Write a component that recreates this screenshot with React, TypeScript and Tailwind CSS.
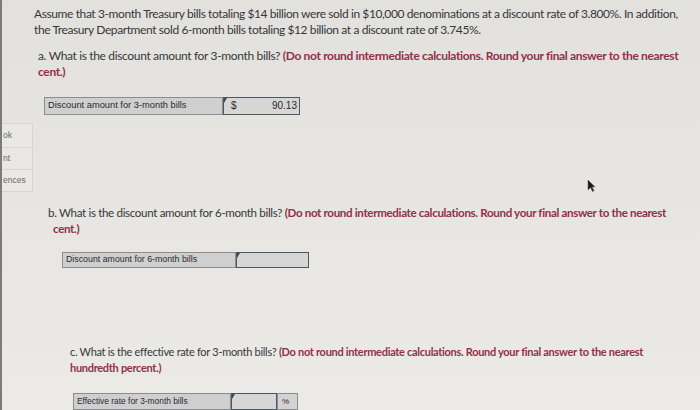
import React from "react";

const font = { fontFamily: "Lato, 'Open Sans', sans-serif" };
const arial = { fontFamily: "'Liberation Sans', Arial, sans-serif" };

function Cursor() {
  return (
    <svg className="absolute left-[587px] top-[179px]" width="9" height="13" viewBox="0 0 9 13">
      <path d="M1 1 L1 11 L3.5 8.5 L5.5 12.5 L7 11.8 L5 8 L8 8 Z" fill="#1c1c1c" stroke="#555" strokeWidth="0.5" />
    </svg>
  );
}

export default function App() {
  return (
    <div
      className="relative w-[700px] h-[410px] overflow-hidden flex bg-gradient-to-b from-[#e2e1dd] to-[#ebeae6] text-[#36373d]"
      style={font}
    >
      <div className="w-[2px] h-full bg-[#7b7b7d]" />
      <div className="w-[31px] pt-[123px] flex flex-col">
        <div className="border-y border-r border-[#d6d5d1] bg-[#e9e8e4] flex flex-col text-[8.5px] text-[#6a6a6e]" style={arial}>
          <div className="h-[24px] flex items-center pl-[1px] border-b border-[#d6d5d1]">ok</div>
          <div className="h-[22px] flex items-center pl-[1px] border-b border-[#d6d5d1]">nt</div>
          <div className="h-[21px] flex items-center pl-[1px]">ences</div>
        </div>
      </div>
      <div className="flex-1 flex flex-col">
        <div className="pl-[1px] pt-[6px] text-[12px] leading-[16px] tracking-[-0.4px] whitespace-nowrap">
          <div>Assume that 3-month Treasury bills totaling $14 billion were sold in $10,000 denominations at a discount rate of 3.800%. In addition,</div>
          <div>the Treasury Department sold 6-month bills totaling $12 billion at a discount rate of 3.745%.</div>
        </div>
        <div className="pl-[5px] pt-[10px] text-[12px] leading-[16px] tracking-[-0.35px] whitespace-nowrap">
          <div>
            a. What is the discount amount for 3-month bills?{" "}
            <span className="font-bold text-[#93304a]">(Do not round intermediate calculations. Round your final answer to the nearest</span>
          </div>
          <div className="font-bold text-[#93304a]">cent.)</div>
        </div>
        <div className="ml-[11px] mt-[17px] flex h-[18px] text-[9.3px]" style={arial}>
          <div className="w-[179px] bg-[#cfcfcf] border border-[#8d8d8f] flex items-center pl-[3px] text-[#2a2a2e]">Discount amount for 3-month bills</div>
          <div className="relative w-[77px] bg-[#d6d6d5] border-[1.5px] border-[#4c5866] flex items-center justify-between px-[2px] text-[10px] text-[#2a2a2e]">
            <span className="absolute left-0 top-0 w-0 h-0 border-t-[5px] border-r-[3px] border-t-[#3a4658] border-r-transparent" />
            <span className="pl-[5px]">$</span>
            <span>90.13</span>
          </div>
        </div>
        <div className="pl-[15px] pt-[90px] text-[11.6px] leading-[16px] tracking-[-0.35px] whitespace-nowrap">
          <div>
            b. What is the discount amount for 6-month bills?{" "}
            <span className="font-bold text-[#93304a]">(Do not round intermediate calculations. Round your final answer to the nearest</span>
          </div>
          <div className="font-bold text-[#93304a] pl-[5px]">cent.)</div>
        </div>
        <div className="ml-[29px] mt-[15px] flex h-[17px] text-[8.8px]" style={arial}>
          <div className="w-[174px] bg-[#cfcfcf] border border-[#8d8d8f] flex items-center pl-[3px] text-[#2a2a2e]">Discount amount for 6-month bills</div>
          <div className="relative w-[73px] bg-[#d6d6d5] border-[1.5px] border-[#4c5866]">
            <span className="absolute left-0 top-0 w-0 h-0 border-t-[5px] border-r-[3px] border-t-[#3a4658] border-r-transparent" />
          </div>
        </div>
        <div className="pl-[37px] pt-[76px] text-[11px] leading-[16px] tracking-[-0.3px] whitespace-nowrap">
          <div>
            c. What is the effective rate for 3-month bills?{" "}
            <span className="font-bold text-[#93304a]">(Do not round intermediate calculations. Round your final answer to the nearest</span>
          </div>
          <div className="font-bold text-[#93304a]">hundredth percent.)</div>
        </div>
        <div className="ml-[40px] mt-[17px] flex h-[17px] text-[8.4px]" style={arial}>
          <div className="w-[158px] bg-[#cfcfcf] border border-[#8d8d8f] flex items-center pl-[3px] text-[#2a2a2e]">Effective rate for 3-month bills</div>
          <div className="relative w-[46px] bg-[#d6d6d5] border-[1.5px] border-[#4c5866]">
            <span className="absolute left-0 top-0 w-0 h-0 border-t-[5px] border-r-[3px] border-t-[#3a4658] border-r-transparent" />
          </div>
          <div className="w-[21px] bg-[#d3d3d3] border border-[#8d8d8f] flex items-center pl-[4px] text-[8px] text-[#2a2a2e]">%</div>
        </div>
      </div>
      <Cursor />
    </div>
  );
}
